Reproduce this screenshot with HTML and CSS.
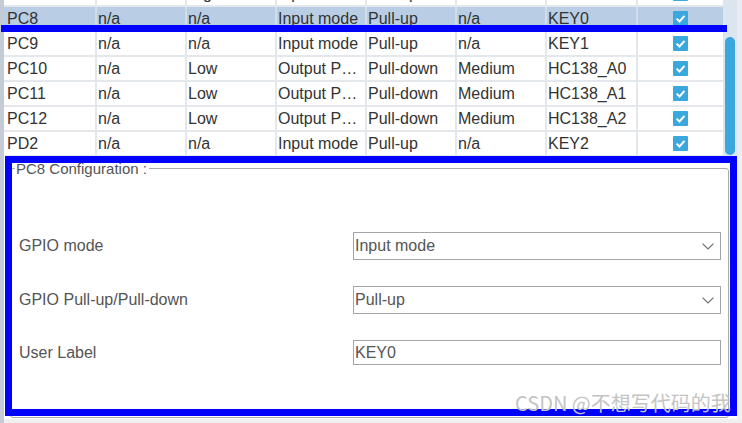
FILE: index.html
```html
<!DOCTYPE html>
<html lang="en">
<head>
<meta charset="utf-8">
<title>GPIO Configuration</title>
<link rel="stylesheet" href="styles.css">
</head>
<body>
<div class="app">
  <div class="edge"></div>
  <div class="main">
    <div class="grid-area">
      <div class="table">
        <div class="rows">
          <div class="row">
            <div class="cell">PC7</div><div class="cell">n/a</div><div class="cell">High</div><div class="cell">Input mode</div><div class="cell">Pull-up</div><div class="cell">n/a</div><div class="cell">KEY3</div>
            <div class="cell check"><svg class="chk" width="15" height="15" viewBox="0 0 15 15"><rect width="15" height="15" rx="1" fill="#3aa7dd"/><path d="M3.6 7.6l2.9 2.9 5-5.6" fill="none" stroke="#fff" stroke-width="2"/></svg></div>
          </div>
          <div class="row sel">
            <div class="cell">PC8</div><div class="cell">n/a</div><div class="cell">n/a</div><div class="cell">Input mode</div><div class="cell">Pull-up</div><div class="cell">n/a</div><div class="cell">KEY0</div>
            <div class="cell check"><svg class="chk" width="15" height="15" viewBox="0 0 15 15"><rect width="15" height="15" rx="1" fill="#3aa7dd"/><path d="M3.6 7.6l2.9 2.9 5-5.6" fill="none" stroke="#fff" stroke-width="2"/></svg></div>
          </div>
          <div class="row">
            <div class="cell">PC9</div><div class="cell">n/a</div><div class="cell">n/a</div><div class="cell">Input mode</div><div class="cell">Pull-up</div><div class="cell">n/a</div><div class="cell">KEY1</div>
            <div class="cell check"><svg class="chk" width="15" height="15" viewBox="0 0 15 15"><rect width="15" height="15" rx="1" fill="#3aa7dd"/><path d="M3.6 7.6l2.9 2.9 5-5.6" fill="none" stroke="#fff" stroke-width="2"/></svg></div>
          </div>
          <div class="row">
            <div class="cell">PC10</div><div class="cell">n/a</div><div class="cell">Low</div><div class="cell">Output P…</div><div class="cell">Pull-down</div><div class="cell">Medium</div><div class="cell">HC138_A0</div>
            <div class="cell check"><svg class="chk" width="15" height="15" viewBox="0 0 15 15"><rect width="15" height="15" rx="1" fill="#3aa7dd"/><path d="M3.6 7.6l2.9 2.9 5-5.6" fill="none" stroke="#fff" stroke-width="2"/></svg></div>
          </div>
          <div class="row">
            <div class="cell">PC11</div><div class="cell">n/a</div><div class="cell">Low</div><div class="cell">Output P…</div><div class="cell">Pull-down</div><div class="cell">Medium</div><div class="cell">HC138_A1</div>
            <div class="cell check"><svg class="chk" width="15" height="15" viewBox="0 0 15 15"><rect width="15" height="15" rx="1" fill="#3aa7dd"/><path d="M3.6 7.6l2.9 2.9 5-5.6" fill="none" stroke="#fff" stroke-width="2"/></svg></div>
          </div>
          <div class="row">
            <div class="cell">PC12</div><div class="cell">n/a</div><div class="cell">Low</div><div class="cell">Output P…</div><div class="cell">Pull-down</div><div class="cell">Medium</div><div class="cell">HC138_A2</div>
            <div class="cell check"><svg class="chk" width="15" height="15" viewBox="0 0 15 15"><rect width="15" height="15" rx="1" fill="#3aa7dd"/><path d="M3.6 7.6l2.9 2.9 5-5.6" fill="none" stroke="#fff" stroke-width="2"/></svg></div>
          </div>
          <div class="row">
            <div class="cell">PD2</div><div class="cell">n/a</div><div class="cell">n/a</div><div class="cell">Input mode</div><div class="cell">Pull-up</div><div class="cell">n/a</div><div class="cell">KEY2</div>
            <div class="cell check"><svg class="chk" width="15" height="15" viewBox="0 0 15 15"><rect width="15" height="15" rx="1" fill="#3aa7dd"/><path d="M3.6 7.6l2.9 2.9 5-5.6" fill="none" stroke="#fff" stroke-width="2"/></svg></div>
          </div>
        </div>
      </div>
      <div class="scrollbar"><div class="thumb"></div></div>
      <div class="gutter"></div>
    </div>
    <div class="config">
      <div class="config-body">
        <fieldset class="group">
          <legend class="group-title">PC8 Configuration :</legend>
          <div class="form">
            <div class="lbl">GPIO mode</div>
            <div class="combo"><span>Input mode</span><svg class="chev" width="12" height="7" viewBox="0 0 12 7"><path d="M0.6 0.6L6 6 11.4 0.6" fill="none" stroke="#6f6f6f" stroke-width="1.2"/></svg></div>
            <div class="lbl">GPIO Pull-up/Pull-down</div>
            <div class="combo"><span>Pull-up</span><svg class="chev" width="12" height="7" viewBox="0 0 12 7"><path d="M0.6 0.6L6 6 11.4 0.6" fill="none" stroke="#6f6f6f" stroke-width="1.2"/></svg></div>
            <div class="lbl">User Label</div>
            <div class="field">KEY0</div>
          </div>
        </fieldset>
      </div>
      <div class="config-gutter"></div>
    </div>
  </div>
  <div class="annot annot-bar"></div>
  <div class="annot annot-box"></div>
  <div class="watermark">CSDN @不想写代码的我</div>
</div>
</body>
</html>
```

FILE: styles.css
```css
html, body {
  margin: 0;
  padding: 0;
}

body {
  width: 742px;
  height: 423px;
  overflow: hidden;
  font-family: "Liberation Sans", Arial, sans-serif;
}

.app {
  position: relative;
  display: flex;
  width: 742px;
  height: 423px;
  background: #f0f0f0;
}

.edge {
  width: 4px;
  flex: none;
  background: #c3ccd4;
}

.main {
  flex: 1;
  display: flex;
  flex-direction: column;
}

.grid-area {
  display: flex;
  height: 156px;
  flex: none;
}

.table {
  width: 719px;
  height: 156px;
  overflow: hidden;
  background: #fff;
}

.rows {
  margin-top: -18px;
}

.row {
  display: grid;
  grid-template-columns: 93px 90px 90px 90px 90px 90px 91px 85px;
  height: 25px;
  box-sizing: border-box;
  border-bottom: 2px solid #e4e8ec;
}

.row.sel {
  background: #b9cee4;
}

.cell {
  border-right: 2px solid #e4e8ec;
  padding-left: 1px;
  font-size: 16px;
  line-height: 23px;
  color: #333;
  white-space: nowrap;
  overflow: hidden;
}

.cell:first-child {
  padding-left: 3px;
}

.row.sel .cell {
  border-right-color: #d2dde9;
}

.cell.check {
  border-right: none;
  padding: 0;
  display: flex;
  align-items: center;
  justify-content: center;
}

.chk {
  display: block;
}

.scrollbar {
  width: 14px;
  flex: none;
  background: #dae5f0;
}

.thumb {
  margin: 37px 0 0 2px;
  width: 10px;
  height: 118px;
  border-radius: 5px;
  background: #3ba7dc;
}

.gutter {
  flex: 1;
  background: #e8edf2;
}

.config {
  display: flex;
  height: 263px;
  flex: none;
}

.config-body {
  width: 733px;
  background: #fff;
  display: flex;
  flex-direction: column;
}

.config-gutter {
  flex: 1;
  background: #eff1f3;
}

.group {
  flex: 1;
  margin: 4px 8px 1px 6px;
  padding: 0;
  border: 1px solid #a9abad;
  border-radius: 3px;
  min-width: 0;
}

.group-title {
  margin-left: 4px;
  padding: 0 2px 0 1px;
  font-size: 15px;
  line-height: 17px;
  color: #555;
}

.form {
  display: grid;
  grid-template-columns: 334px 368px;
  grid-template-rows: 28px 28px 25px;
  row-gap: 26px;
  margin: 55px 7px 0 8px;
}

.lbl {
  align-self: center;
  font-size: 16px;
  color: #555;
}

.combo,
.field {
  box-sizing: border-box;
  border: 1px solid #a3a6a9;
  background: #fff;
  font-size: 16px;
  color: #555;
  display: flex;
  align-items: center;
}

.combo {
  justify-content: space-between;
  padding: 0 6px 0 1px;
}

.field {
  padding-left: 1px;
}

.chev {
  display: block;
}

.annot {
  position: absolute;
  pointer-events: none;
}

.annot-bar {
  left: 1px;
  top: 25px;
  width: 726px;
  height: 7px;
  background: #0000ff;
}

.annot-box {
  left: 5px;
  top: 156px;
  width: 732px;
  height: 260px;
  box-sizing: border-box;
  border: 7px solid #0000ff;
}

.watermark {
  position: absolute;
  left: 515px;
  top: 393px;
  font-family: "Noto Sans CJK SC", "Liberation Sans", sans-serif;
  font-size: 20px;
  line-height: 20px;
  color: #c4c4c4;
  white-space: nowrap;
  z-index: 2;
}
```
